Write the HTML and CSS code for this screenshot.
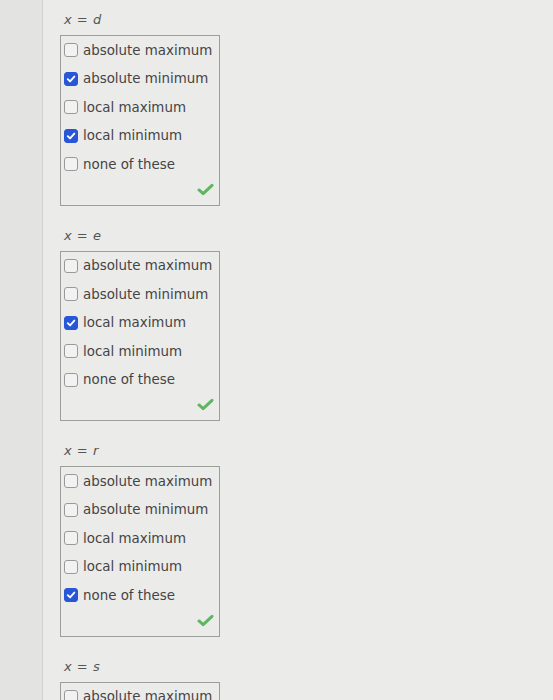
FILE: index.html
```html
<!DOCTYPE html>
<html>
<head>
<meta charset="utf-8">
<link rel="stylesheet" href="styles.css">
</head>
<body>
<div class="page">
  <div class="rail"></div>
  <div class="main">
    <div class="group">
      <div class="label"><i>x</i> = <i>d</i></div>
      <div class="box">
        <div class="row"><span class="cb"></span>absolute maximum</div>
        <div class="row"><span class="cb on"><svg viewBox="0 0 14 14"><path d="M3.2 7.2 L5.9 9.8 L10.9 4.2"/></svg></span>absolute minimum</div>
        <div class="row"><span class="cb"></span>local maximum</div>
        <div class="row"><span class="cb on"><svg viewBox="0 0 14 14"><path d="M3.2 7.2 L5.9 9.8 L10.9 4.2"/></svg></span>local minimum</div>
        <div class="row"><span class="cb"></span>none of these</div>
        <div class="foot"><svg class="ok" viewBox="0 0 18 14"><path d="M2 7.5 L6.5 11.5 L16 2.5"/></svg></div>
      </div>
    </div>
    <div class="group">
      <div class="label"><i>x</i> = <i>e</i></div>
      <div class="box">
        <div class="row"><span class="cb"></span>absolute maximum</div>
        <div class="row"><span class="cb"></span>absolute minimum</div>
        <div class="row"><span class="cb on"><svg viewBox="0 0 14 14"><path d="M3.2 7.2 L5.9 9.8 L10.9 4.2"/></svg></span>local maximum</div>
        <div class="row"><span class="cb"></span>local minimum</div>
        <div class="row"><span class="cb"></span>none of these</div>
        <div class="foot"><svg class="ok" viewBox="0 0 18 14"><path d="M2 7.5 L6.5 11.5 L16 2.5"/></svg></div>
      </div>
    </div>
    <div class="group">
      <div class="label"><i>x</i> = <i>r</i></div>
      <div class="box">
        <div class="row"><span class="cb"></span>absolute maximum</div>
        <div class="row"><span class="cb"></span>absolute minimum</div>
        <div class="row"><span class="cb"></span>local maximum</div>
        <div class="row"><span class="cb"></span>local minimum</div>
        <div class="row"><span class="cb on"><svg viewBox="0 0 14 14"><path d="M3.2 7.2 L5.9 9.8 L10.9 4.2"/></svg></span>none of these</div>
        <div class="foot"><svg class="ok" viewBox="0 0 18 14"><path d="M2 7.5 L6.5 11.5 L16 2.5"/></svg></div>
      </div>
    </div>
    <div class="group">
      <div class="label"><i>x</i> = <i>s</i></div>
      <div class="box">
        <div class="row"><span class="cb"></span>absolute maximum</div>
        <div class="row"><span class="cb"></span>absolute minimum</div>
      </div>
    </div>
  </div>
</div>
</body>
</html>
```
FILE: styles.css
```css
html, body {
  margin: 0;
  padding: 0;
  background: #ebebea;
  overflow: hidden;
}
.page {
  display: flex;
  height: 700px;
  overflow: hidden;
  font-family: "DejaVu Sans", Verdana, sans-serif;
  color: #444;
}
.rail {
  width: 42px;
  flex: none;
  background: #e3e3e2;
  border-right: 1px solid #d2d2d1;
}
.main {
  padding: 11px 0 0 17px;
  display: flex;
  flex-direction: column;
  gap: 21px;
}
.label {
  height: 24px;
  line-height: 18px;
  padding-left: 4px;
  font-size: 13px;
  color: #555;
  letter-spacing: 0.5px;
}
.label i {
  font-style: italic;
}
.box {
  width: 155px;
  border: 1px solid #9c9e99;
  padding: 4px 0 0 3px;
  display: flex;
  flex-direction: column;
  gap: 8.5px;
}
.row {
  height: 20px;
  display: flex;
  align-items: center;
  gap: 5px;
  font-size: 13.4px;
  white-space: nowrap;
}
.cb {
  width: 12px;
  height: 12px;
  border: 1.5px solid #999;
  border-radius: 3px;
  background: #f2f2f2;
  flex: none;
  display: flex;
}
.cb.on {
  background: #2757d6;
  border-color: #2757d6;
}
.cb svg {
  width: 12px;
  height: 12px;
}
.cb svg path {
  fill: none;
  stroke: #fff;
  stroke-width: 2.2;
  stroke-linecap: round;
  stroke-linejoin: round;
}
.foot {
  height: 22px;
  display: flex;
  justify-content: flex-end;
  align-items: flex-start;
  padding-right: 5px;
  margin-top: 0;
}
.ok {
  width: 17px;
  height: 13px;
}
.ok path {
  fill: none;
  stroke: #5fb660;
  stroke-width: 3.2;
  stroke-linecap: round;
  stroke-linejoin: round;
}
```
